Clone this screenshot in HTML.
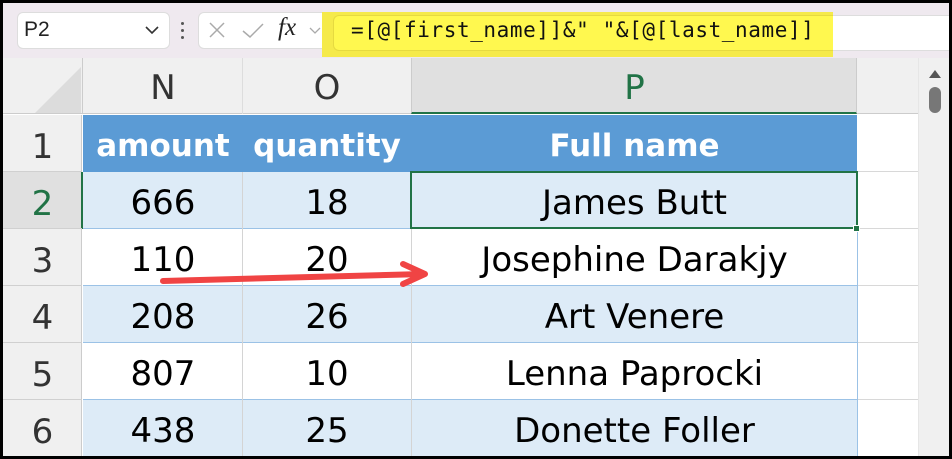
<!DOCTYPE html>
<html><head><meta charset="utf-8"><style>
*{margin:0;padding:0;box-sizing:border-box}
body{width:952px;height:459px;background:#000;position:relative;overflow:hidden;font-family:"Segoe UI","DejaVu Sans","Liberation Sans",sans-serif}
#app{position:absolute;left:3px;top:3px;width:946px;height:453px;background:#fff;overflow:hidden}
.abs{position:absolute}
.tb{left:0;top:0;width:946px;height:55px;background:#efe9ef}
.cell{position:absolute;display:flex;align-items:center;justify-content:center;font-size:34px;color:#000}
</style></head><body>
<div id="app">
<div class="abs tb"></div>
<div class="abs" style="left:14px;top:9px;width:153px;height:37px;background:#fff;border:1px solid #ddd;border-radius:6px"></div>
<div class="abs" style="left:21px;top:15px;font-size:21px;color:#222;font-family:'Liberation Sans',sans-serif">P2</div>
<svg class="abs" style="left:142px;top:22px" width="14" height="10"><path d="M1 2 L7 8 L13 2" stroke="#333" stroke-width="1.6" fill="none"/></svg>
<div class="abs" style="left:178px;top:19px;width:3px;height:3px;background:#555;border-radius:2px"></div>
<div class="abs" style="left:178px;top:26px;width:3px;height:3px;background:#555;border-radius:2px"></div>
<div class="abs" style="left:178px;top:33px;width:3px;height:3px;background:#555;border-radius:2px"></div>
<div class="abs" style="left:195px;top:9px;width:135px;height:37px;background:#fff;border:1px solid #ddd;border-radius:6px"></div>
<svg class="abs" style="left:205px;top:18px" width="20" height="20"><path d="M2 2 L16 16 M16 2 L2 16" stroke="#aaa" stroke-width="1.5"/></svg>
<svg class="abs" style="left:238px;top:18px" width="24" height="20"><path d="M2 10 L9 16 L22 3" stroke="#aaa" stroke-width="1.5" fill="none"/></svg>
<div class="abs" style="left:275px;top:11px;font-size:25px;font-style:italic;font-family:'Liberation Serif',serif;color:#222">fx</div>
<svg class="abs" style="left:306px;top:24px" width="12" height="8"><path d="M1 1 L6 6 L11 1" stroke="#aaa" stroke-width="1.3" fill="none"/></svg>
<div class="abs" style="left:319px;top:9px;width:511px;height:45px;background:#f5ea4a"></div>
<div class="abs" style="left:330px;top:12px;width:500px;height:36px;background:#fff84f;border:1px solid #e6da40;border-right:none;border-radius:6px 0 0 6px"></div>
<div class="abs" style="left:830px;top:12px;width:116px;height:36px;background:#fff;border-top:1px solid #ddd;border-bottom:1px solid #ddd"></div>
<div class="abs" style="left:348px;top:15px;font-size:21px;font-family:'DejaVu Sans Mono','Liberation Mono',monospace;color:#111;letter-spacing:0.6px">=[@[first_name]]&amp;" "&amp;[@[last_name]]</div>

<div class="abs" style="left:0;top:55px;width:915px;height:56px;background:#f0f0f0;border-bottom:1px solid #ccc"></div>
<svg class="abs" style="left:30px;top:62px" width="50" height="50"><path d="M48 2 L48 48 L2 48 Z" fill="#dcdcdc"/></svg>
<div class="abs" style="left:79px;top:55px;width:1px;height:56px;background:#ccc"></div>
<div class="abs" style="left:239px;top:55px;width:1px;height:56px;background:#ddd"></div>
<div class="abs" style="left:408px;top:55px;width:446px;height:56px;background:#e0e0e0;border-left:1px solid #ccc;border-right:1px solid #ccc;border-bottom:2px solid #217346"></div>
<div class="cell" style="left:80px;top:57px;width:160px;height:56px;font-size:34px;color:#333">N</div>
<div class="cell" style="left:240px;top:57px;width:168px;height:56px;font-size:34px;color:#333">O</div>
<div class="cell" style="left:409px;top:57px;width:445px;height:56px;font-size:34px;color:#217346">P</div>

<div class="abs" style="left:0;top:112px;width:79px;height:345px;background:#f0f0f0;border-right:1px solid #ccc"></div>
<div class="abs" style="left:0;top:169px;width:80px;height:57px;background:#e0e0e0;border-right:2px solid #217346"></div>

<div class="abs" style="left:854px;top:112px;width:61px;height:345px;background:#fff"></div>
<div class="abs" style="left:915px;top:55px;width:31px;height:400px;background:#f0f0f0;border-left:1px solid #e6e6e6"></div>
<svg class="abs" style="left:925px;top:66px" width="14" height="10"><path d="M7 1 L13 9 L1 9 Z" fill="#555"/></svg>
<div class="abs" style="left:926px;top:84px;width:12px;height:26px;background:#777;border-radius:6px"></div>

<div id="grid"></div>
<script>
var rows=[["amount","quantity","Full name"],["666","18","James Butt"],["110","20","Josephine Darakjy"],["208","26","Art Venere"],["807","10","Lenna Paprocki"],["438","25","Donette Foller"]];
var h='';
for(var i=0;i<6;i++){
 var y=112+i*57;
 var bg=i==0?'#5b9bd5':(i%2==1?'#ddebf7':'#fff');
 h+='<div class="abs" style="left:80px;top:'+y+'px;width:774px;height:57px;background:'+bg+';border-bottom:1px solid '+(i==0?'#5b9bd5':'#9bc2e6')+'"></div>';
 if(i>0){h+='<div class="abs" style="left:239px;top:'+y+'px;width:1px;height:57px;background:#d4d4d4"></div><div class="abs" style="left:408px;top:'+y+'px;width:1px;height:57px;background:#d4d4d4"></div><div class="abs" style="left:854px;top:'+y+'px;width:1px;height:57px;background:#9bc2e6"></div>';}
 h+='<div class="abs" style="left:0;top:'+(y+56)+'px;width:79px;height:1px;background:#d0d0d0"></div><div class="abs" style="left:855px;top:'+(y+56)+'px;width:60px;height:1px;background:#d8d8d8"></div>';
 h+='<div class="cell" style="left:0;top:'+(y+3)+'px;width:79px;height:57px;font-size:34px;color:'+(i==1?'#217346':'#333')+'">'+(i+1)+'</div>';
 var col=i==0?'#fff':'#000',fw=i==0?'bold':'normal',fs=i==0?'31px':'34px';
 var xs=[[80,160],[240,168],[409,445]];
 for(var j=0;j<3;j++)h+='<div class="cell" style="left:'+xs[j][0]+'px;top:'+(y+3)+'px;width:'+xs[j][1]+'px;height:56px;color:'+col+';font-weight:'+fw+';font-size:'+fs+'">'+rows[i][j]+'</div>';
}
h+='<div class="abs" style="left:407px;top:168px;width:448px;height:58px;border:2px solid #217346"></div><div class="abs" style="left:850px;top:222px;width:7px;height:7px;background:#217346;border:1px solid #fff"></div>';
document.getElementById('grid').innerHTML=h;
</script>
<svg class="abs" style="left:0;top:0" width="946" height="453"><path d="M160 278 L421 271 M400 261 L422 271 L400 281" stroke="#f04444" stroke-width="6" stroke-linecap="round" stroke-linejoin="round" fill="none"/></svg>
</div>
</body></html>
